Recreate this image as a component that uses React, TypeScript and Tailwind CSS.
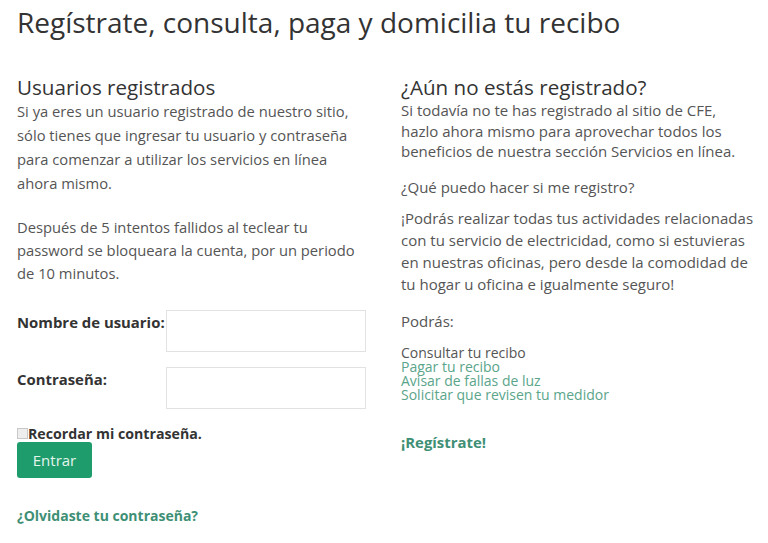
import React from "react";

export default function App() {
  return (
    <div className="w-[768px] h-[543px] overflow-hidden bg-white pl-[17px] font-['Open_Sans',sans-serif] text-[#555]">
      <h1 className="text-[28px] leading-[44px] text-[#333] font-normal whitespace-nowrap">
        Regístrate, consulta, paga y domicilia tu recibo
      </h1>
      <div className="flex mt-[31px]">
        <div className="w-[384px] shrink-0">
          <h2 className="text-[20.6px] leading-[24px] text-[#333] whitespace-nowrap">Usuarios registrados</h2>
          <p className="text-[14.75px] leading-[24px] whitespace-nowrap">
            Si ya eres un usuario registrado de nuestro sitio,
            <br />
            sólo tienes que ingresar tu usuario y contraseña
            <br />
            para comenzar a utilizar los servicios en línea
            <br />
            ahora mismo.
          </p>
          <p className="text-[14.75px] leading-[23px] mt-[21px] whitespace-nowrap">
            Después de 5 intentos fallidos al teclear tu
            <br />
            password se bloqueara la cuenta, por un periodo
            <br />
            de 10 minutos.
          </p>
          <div className="mt-[25px] grid grid-cols-[149px_200px] gap-y-[15px] text-[14.9px] font-bold text-[#333]">
            <label className="leading-[20px] pt-[2px] whitespace-nowrap">Nombre de usuario:</label>
            <input className="h-[42px] border border-[#e2e2e2] bg-white outline-none" />
            <label className="leading-[20px] pt-[2px]">Contraseña:</label>
            <input type="password" className="h-[42px] border border-[#e2e2e2] bg-white outline-none" />
          </div>
          <div className="mt-[16px] flex items-center h-[17px] text-[14.2px] font-bold text-[#333]">
            <span className="w-[11px] h-[11px] border border-[#c8c8c8] bg-[#eeeeee] inline-block" />
            <span className="leading-[17px]">Recordar mi contraseña.</span>
          </div>
          <button className="w-[75px] h-[36px] rounded-[3px] bg-[#1f9c6c] text-[#e4f5ec] text-[15px] leading-[20px]">
            Entrar
          </button>
          <div className="mt-[28px] text-[14px] leading-[20px] font-bold text-[#3e8f75]">¿Olvidaste tu contraseña?</div>
        </div>
        <div className="flex-1">
          <h2 className="text-[20.6px] leading-[24px] text-[#333] whitespace-nowrap">¿Aún no estás registrado?</h2>
          <p className="text-[15px] leading-[20.5px] mt-[1px] whitespace-nowrap">
            Si todavía no te has registrado al sitio de CFE,
            <br />
            hazlo ahora mismo para aprovechar todos los
            <br />
            beneficios de nuestra sección Servicios en línea.
          </p>
          <p className="text-[15px] leading-[20px] mt-[15px]">¿Qué puedo hacer si me registro?</p>
          <p className="text-[15px] leading-[22.3px] mt-[10px] whitespace-nowrap">
            ¡Podrás realizar todas tus actividades relacionadas
            <br />
            con tu servicio de electricidad, como si estuvieras
            <br />
            en nuestras oficinas, pero desde la comodidad de
            <br />
            tu hogar u oficina e igualmente seguro!
          </p>
          <p className="text-[15px] leading-[20px] mt-[15px]">Podrás:</p>
          <ul className="text-[14px] leading-[14px] mt-[15px] whitespace-nowrap">
            <li>Consultar tu recibo</li>
            <li className="text-[#5aa58b]">Pagar tu recibo</li>
            <li className="text-[#5aa58b]">Avisar de fallas de luz</li>
            <li className="text-[#5aa58b]">Solicitar que revisen tu medidor</li>
          </ul>
          <div className="mt-[30px] text-[14.9px] leading-[20px] font-bold text-[#3e8f75]">¡Regístrate!</div>
        </div>
      </div>
    </div>
  );
}
